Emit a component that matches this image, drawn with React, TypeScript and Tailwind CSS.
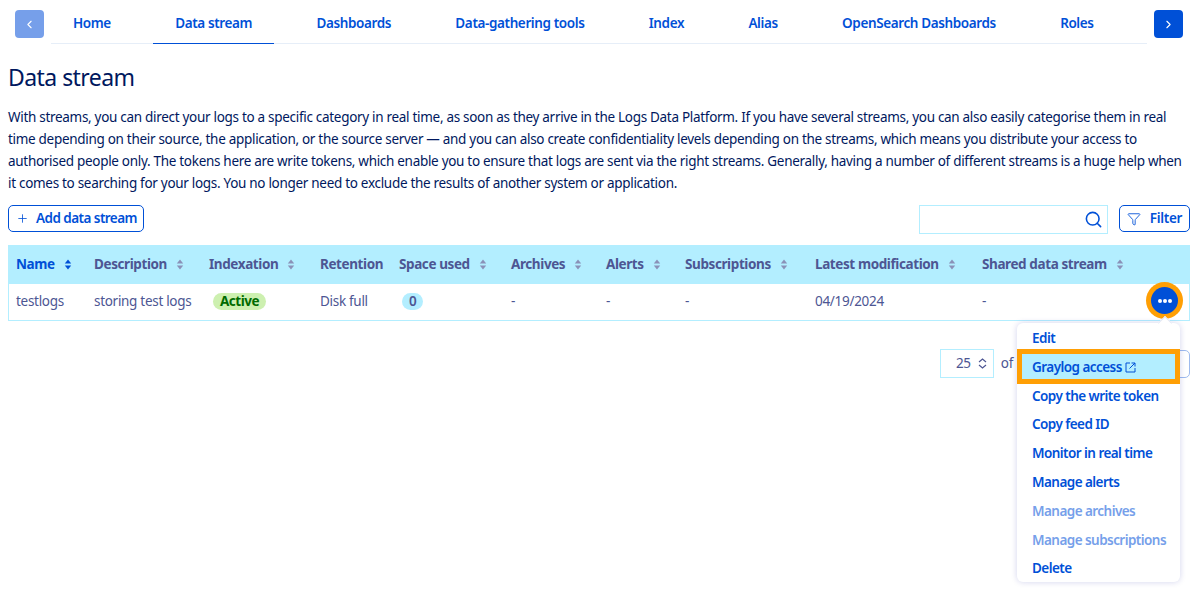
import React from 'react';
import { ChevronLeft, ChevronRight, Plus, Search, Funnel } from 'lucide-react';

const tabs = ['Home', 'Data stream', 'Dashboards', 'Data-gathering tools', 'Index', 'Alias', 'OpenSearch Dashboards', 'Roles'];

const columns = [
  { name: 'Name', width: 'w-[78px]', active: true },
  { name: 'Description', width: 'w-[115px]' },
  { name: 'Indexation', width: 'w-[111px]' },
  { name: 'Retention', width: 'w-[79px]', noSort: true },
  { name: 'Space used', width: 'w-[112px]' },
  { name: 'Archives', width: 'w-[95px]' },
  { name: 'Alerts', width: 'w-[79px]' },
  { name: 'Subscriptions', width: 'w-[130px]' },
  { name: 'Latest modification', width: 'w-[167px]' },
  { name: 'Shared data stream', width: 'w-[216px]' },
];

const menu = [
  { label: 'Edit' },
  { label: 'Graylog access', highlight: true },
  { label: 'Copy the write token' },
  { label: 'Copy feed ID' },
  { label: 'Monitor in real time' },
  { label: 'Manage alerts' },
  { label: 'Manage archives', disabled: true },
  { label: 'Manage subscriptions', disabled: true },
  { label: 'Delete' },
];

const SortIcon = ({ active }: { active?: boolean }) => (
  <svg viewBox="0 0 8 12" className={`w-[8px] h-[11px] ${active ? 'fill-[#0050d7]' : 'fill-[#8a91b8]'}`}>
    <path d="M4 0.5 7.5 5H0.5Z" />
    <path d="M4 11.5 0.5 7H7.5Z" />
  </svg>
);

const ExternalIcon = () => (
  <svg viewBox="0 0 11 11" fill="none" stroke="currentColor" strokeWidth="1" className="w-[11px] h-[11px]">
    <path d="M5 1H1V10H10V6" />
    <path d="M6.5 1H10V4.5M10 1 4.5 6.5" />
  </svg>
);

const UpDownIcon = () => (
  <svg viewBox="0 0 9 11" fill="none" stroke="currentColor" strokeWidth="1.2" className="w-[9px] h-[11px]">
    <path d="M1 4 4.5 1 8 4" />
    <path d="M1 7 4.5 10 8 7" />
  </svg>
);

export default function App() {
  return (
    <div className="relative w-[1200px] h-[594px] overflow-hidden bg-white text-[13.5px] text-[#4d5693] font-['Noto_Sans',sans-serif] tracking-[-0.3px]">
      <div className="flex items-start pl-[15px] pr-[16px] pt-[10px]">
        <button className="w-[29px] h-[28px] rounded-[4px] bg-[#769fea] flex items-center justify-center text-white">
          <ChevronLeft className="w-[13px] h-[13px]" />
        </button>
        <div className="ml-[7px] w-[1096px] h-[34px] flex gap-[20.3px] border-b border-[#e6eef8]">
          {tabs.map((t) => (
            <div
              key={t}
              className={`px-[22px] h-[34px] leading-[27px] font-semibold tracking-[-0.38px] text-[#0050d7] whitespace-nowrap ${t === 'Data stream' ? 'border-b border-[#0050d7]' : ''}`}
            >
              {t}
            </div>
          ))}
        </div>
        <button className="ml-[7px] w-[29px] h-[28px] rounded-[4px] bg-[#0050d7] flex items-center justify-center text-white">
          <ChevronRight className="w-[13px] h-[13px]" />
        </button>
      </div>

      <div className="pl-[8px] pr-[10px]">
        <h1 className="mt-[17px] text-[23px] leading-[32px] text-[#00185e] tracking-[-0.55px]">Data stream</h1>
        <p className="mt-[13px] leading-[22px] text-[#00185e] whitespace-nowrap">
          With streams, you can direct your logs to a specific category in real time, as soon as they arrive in the Logs Data Platform. If you have several streams, you can also easily categorise them in real
          <br />
          time depending on their source, the application, or the source server — and you can also create confidentiality levels depending on the streams, which means you distribute your access to
          <br />
          authorised people only. The tokens here are write tokens, which enable you to ensure that logs are sent via the right streams. Generally, having a number of different streams is a huge help when
          <br />
          it comes to searching for your logs. You no longer need to exclude the results of another system or application.
        </p>

        <div className="mt-[11px] flex items-start justify-between">
          <button className="w-[136px] h-[27px] pl-[7px] flex items-center gap-[7px] rounded-[5px] border border-[#0050d7] text-[#0050d7] font-semibold tracking-[-0.55px] whitespace-nowrap">
            <Plus className="w-[13px] h-[13px]" strokeWidth={1.5} />
            Add data stream
          </button>
          <div className="flex items-start gap-[11px]">
            <div className="w-[189px] h-[29px] border border-[#b3eeff] flex items-center justify-end pr-[4px] text-[#0050d7]">
              <Search className="w-[19px] h-[19px]" />
            </div>
            <button className="w-[71px] h-[27px] flex items-center justify-center gap-[9px] rounded-[5px] border border-[#0050d7] text-[#0050d7] font-semibold tracking-[-0.3px]">
              <Funnel className="w-[14px] h-[14px]" strokeWidth={1.5} />
              Filter
            </button>
          </div>
        </div>

        <table className="mt-[11px] w-[1182px] table-fixed border-separate border-spacing-0">
          <thead>
            <tr className="bg-[#b3eeff] h-[39px]">
              {columns.map((c) => (
                <th key={c.name} className={`${c.width} pl-[8px] pb-[1px] text-left font-bold tracking-[-0.4px] whitespace-nowrap ${c.active ? 'text-[#0050d7]' : 'text-[#4d5693]'}`}>
                  <span className="inline-flex items-center gap-[9px]">
                    {c.name}
                    {!c.noSort && <SortIcon active={c.active} />}
                  </span>
                </th>
              ))}
            </tr>
          </thead>
          <tbody>
            <tr className="h-[37px]">
              <td className="pl-[7px] pb-[1px] border-b border-l border-[#b3eeff]">testlogs</td>
              <td className="pl-[8px] pb-[1px] border-b border-[#b3eeff] whitespace-nowrap">storing test logs</td>
              <td className="pl-[8px] pb-[1px] border-b border-[#b3eeff]">
                <span className="ml-[4px] inline-block h-[17px] leading-[17px] px-[7px] rounded-full bg-[#cdf0b0] text-[#006b00] font-bold tracking-[-0.5px]">Active</span>
              </td>
              <td className="pl-[8px] pb-[1px] border-b border-[#b3eeff] whitespace-nowrap">Disk full</td>
              <td className="pl-[8px] pb-[1px] border-b border-[#b3eeff]">
                <span className="ml-[3px] inline-block h-[17px] leading-[17px] px-[7px] rounded-full bg-[#b3eeff] font-semibold">0</span>
              </td>
              <td className="pl-[8px] pb-[1px] border-b border-[#b3eeff]">-</td>
              <td className="pl-[8px] pb-[1px] border-b border-[#b3eeff]">-</td>
              <td className="pl-[8px] pb-[1px] border-b border-[#b3eeff]">-</td>
              <td className="pl-[8px] pb-[1px] border-b border-[#b3eeff]">04/19/2024</td>
              <td className="pl-[8px] pb-[1px] border-b border-r border-[#b3eeff] relative">
                -
                <span className="absolute right-[6px] top-[-2px] w-[37px] h-[37px] rounded-full bg-[#ff9f04] flex items-center justify-center">
                  <span className="w-[27px] h-[27px] rounded-full bg-[#0050d7] flex items-center justify-center gap-[1px]">
                    <i className="w-[4px] h-[4px] rounded-full bg-white" />
                    <i className="w-[4px] h-[4px] rounded-full bg-white" />
                    <i className="w-[4px] h-[4px] rounded-full bg-white" />
                  </span>
                </span>
              </td>
            </tr>
          </tbody>
        </table>

        <div className="mt-[28px] flex items-center justify-end">
          <div className="w-[54px] h-[29px] border border-[#b3eeff] flex items-center justify-end gap-[7px] pr-[6px]">
            25
            <UpDownIcon />
          </div>
          <span className="ml-[7px]">of</span>
          <div className="ml-[157px] w-[20px] h-[28px] rounded-[5px] border border-[#9ebbee]" />
        </div>
      </div>

      <div className="absolute left-[1017px] top-[323px] w-[163px] h-[259px] pt-[1px] rounded-[6px] bg-white shadow-[0_0_6px_rgba(0,14,156,0.18)] font-semibold tracking-[-0.55px] text-[#0050d7]">
        <div className="absolute right-[10px] -top-[5px] w-[10px] h-[10px] rotate-45 bg-white border-l border-t border-[#e6e8f4]" />
        {menu.map((m) => (
          <div
            key={m.label}
            className={`relative h-[28.8px] leading-[28.8px] pl-[15px] whitespace-nowrap ${m.disabled ? 'text-[#769fea]' : ''}`}
          >
            {m.highlight && (
              <span className="absolute left-0 right-0 -top-[4px] -bottom-[2px] border-[5px] border-[#ff9f04] bg-[#b3eeff]" />
            )}
            <span className="relative inline-flex items-center gap-[3px]">
              {m.label}
              {m.highlight && <ExternalIcon />}
            </span>
          </div>
        ))}
      </div>
    </div>
  );
}
